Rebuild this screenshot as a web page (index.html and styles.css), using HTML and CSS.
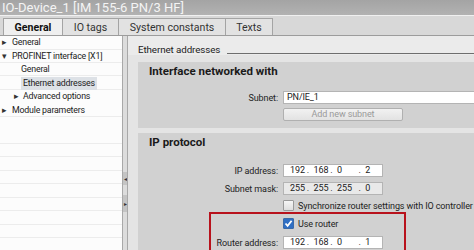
FILE: index.html
```html
<!DOCTYPE html>
<html lang="en">

<head>
    <meta charset="UTF-8">
    <title>IO-Device_1 properties</title>
    <link rel="stylesheet" href="styles.css">
</head>

<body>
    <div class="window">
        <div class="titlebar">IO-Device_1 [IM 155-6 PN/3 HF]</div>

        <div class="tabs">
            <div class="tab active">General</div>
            <div class="tab tab-io">IO tags</div>
            <div class="tab tab-sys">System constants</div>
            <div class="tab tab-texts">Texts</div>
        </div>

        <div class="body">
            <div class="tree">
                <div class="node"><span class="caret">&#9656;</span>General</div>
                <div class="node"><span class="caret">&#9662;</span>PROFINET interface [X1]</div>
                <div class="node child">General</div>
                <div class="node child"><span class="selected">Ethernet addresses</span></div>
                <div class="node sub"><span class="caret">&#9656;</span>Advanced options</div>
                <div class="node"><span class="caret">&#9656;</span>Module parameters</div>
            </div>

            <div class="splitter">
                <span class="grip grip-left">&#9666;</span>
                <span class="grip grip-right">&#9656;</span>
            </div>

            <div class="content">
                <div class="head">
                    <span>Ethernet addresses</span>
                    <span class="rule"></span>
                </div>

                <div class="group group-net">
                    <h3>Interface networked with</h3>
                    <div class="row row-subnet">
                        <span class="label">Subnet:</span>
                        <div class="field field-wide">PN/IE_1</div>
                    </div>
                    <div class="row row-btn">
                        <span class="label"></span>
                        <div class="btn">Add new subnet</div>
                    </div>
                </div>

                <div class="group group-ip">
                    <h3>IP protocol</h3>
                    <div class="row row-ip">
                        <span class="label">IP address:</span>
                        <div class="field ip">
                            <span class="oct">192</span><span class="dot">.</span><span class="oct">168</span><span class="dot">.</span><span class="oct oct-wide">0</span><span class="dot">.</span><span class="oct">2</span>
                        </div>
                    </div>
                    <div class="row row-mask">
                        <span class="label">Subnet mask:</span>
                        <div class="field ip readonly">
                            <span class="oct">255</span><span class="dot">.</span><span class="oct">255</span><span class="dot">.</span><span class="oct oct-wide">255</span><span class="dot">.</span><span class="oct">0</span>
                        </div>
                    </div>
                    <div class="row row-sync">
                        <span class="label"></span>
                        <div class="check"><span class="box"></span>Synchronize router settings with IO controller</div>
                    </div>

                    <div class="highlight">
                        <div class="row row-use">
                            <span class="label"></span>
                            <div class="check"><span class="box checked"><svg width="9" height="9" viewBox="0 0 9 9"><path d="M1.5 4.5 L3.6 6.8 L7.6 1.8" fill="none" stroke="#fff" stroke-width="1.8"/></svg></span>Use router</div>
                        </div>
                        <div class="row row-router">
                            <span class="label">Router address:</span>
                            <div class="field ip">
                                <span class="oct">192</span><span class="dot">.</span><span class="oct">168</span><span class="dot">.</span><span class="oct oct-wide">0</span><span class="dot">.</span><span class="oct">1</span>
                            </div>
                        </div>
                    </div>
                </div>
            </div>
        </div>
    </div>
</body>

</html>
```

FILE: styles.css
```css
body {
    margin: 0;
    width: 474px;
    height: 250px;
    overflow: hidden;
    font-family: Roboto, "Liberation Sans", sans-serif;
    font-size: 9px;
    letter-spacing: -0.1px;
    color: #222;
    background: #e6e6e6;
}

.window {
    display: flex;
    flex-direction: column;
    height: 250px;
}

.titlebar {
    height: 15px;
    line-height: 15px;
    padding-left: 2px;
    font-size: 13px;
    letter-spacing: 0;
    color: #f4f4f4;
    background: linear-gradient(#a4a4a4, #b2b2b2);
    border-bottom: 1px solid #f0f0f0;
}

.tabs {
    display: flex;
    align-items: flex-end;
    height: 19px;
    padding-left: 3px;
    background: #d8d8d8;
    border-bottom: 1px solid #9c9c9c;
}

.tab {
    height: 17px;
    line-height: 17px;
    box-sizing: border-box;
    text-align: center;
    font-size: 10.6px;
    letter-spacing: 0;
    color: #333;
    background: #e2e2e2;
    border: 1px solid #a4a4a4;
    border-bottom: none;
    margin-right: -1px;
}

.tab.active {
    width: 60px;
    font-weight: bold;
    color: #111;
    background: #efefef;
}

.tab-io {
    width: 57px;
}

.tab-sys {
    width: 108px;
}

.tab-texts {
    width: 48px;
}

.body {
    flex: 1;
    display: flex;
    min-height: 0;
}

.tree {
    width: 122px;
    flex-shrink: 0;
    font-size: 8.8px;
    letter-spacing: -0.2px;
    background: repeating-linear-gradient(#fcfcfc 0, #fcfcfc 12.5px, #ececec 12.5px, #ececec 13.5px);
}

.node {
    height: 13.5px;
    line-height: 13.5px;
    padding-left: 12px;
    position: relative;
    color: #222;
    white-space: nowrap;
}

.caret {
    position: absolute;
    left: 2px;
    font-size: 9px;
    color: #333;
}

.node.child {
    padding-left: 21px;
}

.node.sub {
    padding-left: 23px;
}

.node.sub .caret {
    left: 14px;
}

.selected {
    display: inline-block;
    padding: 0 2px;
    line-height: 13px;
    background: #dde1e6;
}

.splitter {
    width: 4px;
    flex-shrink: 0;
    display: flex;
    flex-direction: column;
    background: #dcdcdc;
    border-left: 1px solid #a8a8a8;
    border-right: 1px solid #a8a8a8;
}

.grip {
    height: 13px;
    line-height: 13px;
    font-size: 6px;
    color: #333;
    background: #c4c4c4;
    text-align: center;
    overflow: hidden;
}

.grip-left {
    margin-top: 136px;
}

.grip-right {
    margin-top: 10px;
    height: 17px;
    line-height: 17px;
}

.content {
    flex: 1;
    overflow: hidden;
    background: #e4e4e4;
}

.head {
    display: flex;
    align-items: flex-end;
    height: 19px;
    padding-left: 10px;
    font-size: 9.8px;
    background: #ebebeb;
    white-space: nowrap;
}

.head .rule {
    flex: 1;
    margin-left: 7px;
    margin-bottom: 1px;
    border-bottom: 1px solid #6e6e6e;
}

.group {
    margin-left: 10px;
    width: 420px;
    background: #d1d1d1;
}

.group h3 {
    margin: 0;
    padding-left: 11px;
    font-size: 11.5px;
    letter-spacing: 0;
    line-height: 13px;
    color: #1a1a1a;
}

.group-net {
    margin-top: 7px;
    padding: 3px 0 7px;
}

.group-ip {
    margin-top: 5px;
    padding-top: 3px;
    height: 120px;
}

.row {
    display: grid;
    grid-template-columns: 140px 1fr;
    column-gap: 5px;
    align-items: center;
    height: 13px;
}

.label {
    text-align: right;
    white-space: nowrap;
}

.field {
    box-sizing: border-box;
    height: 13px;
    line-height: 11px;
    padding-left: 3px;
    background: #fff;
    border: 1px solid #b4b4b4;
    white-space: nowrap;
}

.row-subnet {
    margin-top: 13px;
}

.row-btn {
    margin-top: 4px;
}

.btn {
    box-sizing: border-box;
    width: 120px;
    height: 13px;
    line-height: 11px;
    text-align: center;
    color: #9a9a9a;
    background: linear-gradient(#f2f2f2, #e2e2e2);
    border: 1px solid #b0b0b0;
    border-radius: 2px;
}

.ip {
    width: 100px;
    display: flex;
    padding-left: 6px;
}

.ip.readonly {
    background: #e9e9e9;
}

.oct {
    width: 17px;
}

.oct-wide {
    width: 22px;
}

.dot {
    width: 7px;
}

.row-ip {
    margin-top: 15px;
}

.row-mask {
    margin-top: 5px;
}

.row-sync {
    margin-top: 4px;
}

.check {
    display: flex;
    align-items: center;
    white-space: nowrap;
}

.box {
    box-sizing: border-box;
    width: 11px;
    height: 11px;
    margin-right: 4px;
    background: linear-gradient(#f6f6f6, #dedede);
    border: 1px solid #9a9a9a;
    border-radius: 1px;
    display: flex;
    align-items: center;
    justify-content: center;
}

.box.checked {
    background: #2f6fc4;
    border-color: #3a6aa8;
}

.highlight {
    margin-top: 0;
    margin-left: 71px;
    width: 197px;
    height: 60px;
    box-sizing: border-box;
    border: 2px solid #b8121c;
}

.highlight .row {
    grid-template-columns: 67px 1fr;
}

.row-use {
    margin-top: 3px;
}

.row-router {
    margin-top: 6px;
}
```
